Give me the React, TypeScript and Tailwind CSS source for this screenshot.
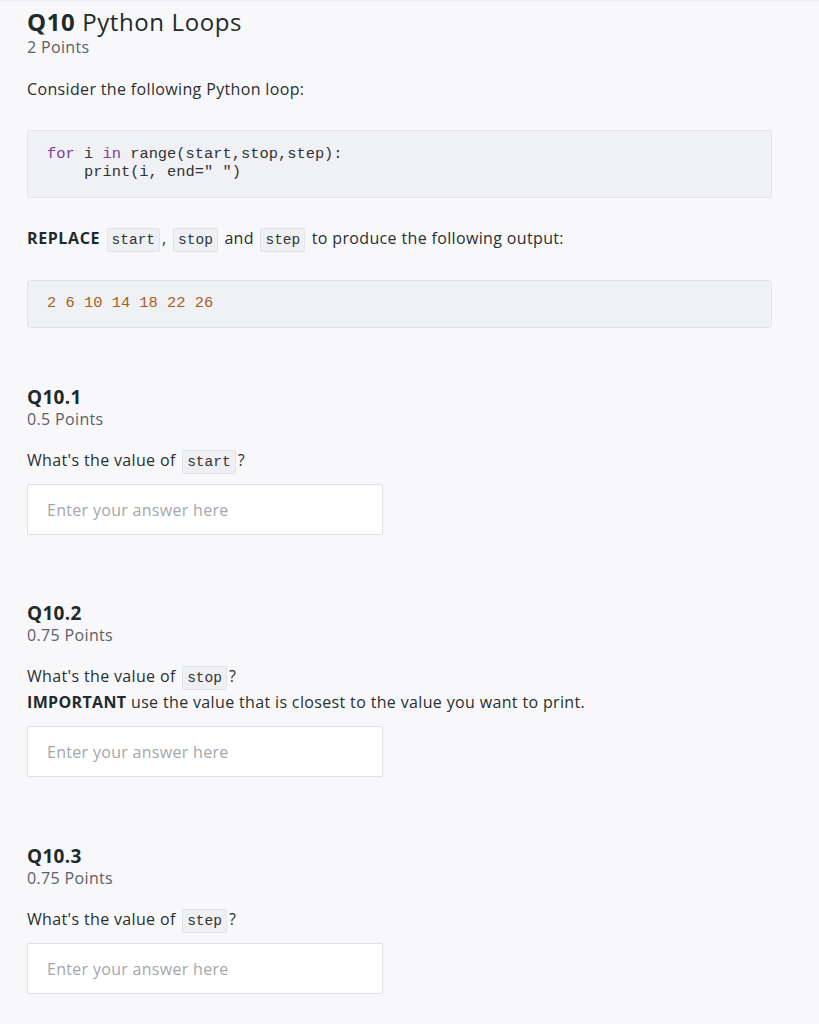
import React from 'react';

const MONO = "font-['Liberation_Mono',Courier,monospace]";

function Code({ children }: { children: React.ReactNode }) {
  return (
    <code
      className={`${MONO} mx-[2px] px-[4px] py-[3px] leading-[20px] tracking-normal text-[14.5px] text-[#333] bg-[#eff0f3] border border-[#e1e3e8] rounded-[2px]`}
    >
      {children}
    </code>
  );
}

function AnswerInput() {
  return (
    <input
      type="text"
      placeholder="Enter your answer here"
      className="mt-[11px] block w-[356px] h-[51px] px-[19px] bg-white border border-[#dcdfe3] rounded-[2px] text-[16px] tracking-[0.3px] text-[#333] placeholder:text-[#a3a7ab] outline-none"
    />
  );
}

interface Part {
  id: string;
  points: string;
  variable: string;
  top: string;
  note?: boolean;
}

const PARTS: Part[] = [
  { id: 'Q10.1', points: '0.5 Points', variable: 'start', top: 'mt-[57px]' },
  { id: 'Q10.2', points: '0.75 Points', variable: 'stop', top: 'mt-[66px]', note: true },
  { id: 'Q10.3', points: '0.75 Points', variable: 'step', top: 'mt-[67px]' },
];

export default function App() {
  return (
    <div className="min-h-[1024px] bg-[#f8f8fa] shadow-[inset_0_3px_3px_-2px_rgba(0,0,0,0.06)] font-['Open_Sans','Noto_Sans',sans-serif] text-[#1e2a2b]">
      <div className="pl-[27px] pr-[47px] pt-[7px]">
        {/* Header */}
        <h1 className="text-[24px] leading-[30px] font-normal tracking-[0.6px]">
          <span className="font-bold">Q10</span> Python Loops
        </h1>
        <p className="text-[16px] leading-[20px] tracking-[0.35px] text-[#5b6166]">2 Points</p>

        <p className="mt-[21px] text-[16px] leading-[22px] tracking-[0.35px] text-[#2a2f31]">
          Consider the following Python loop:
        </p>

        <pre
          className={`${MONO} mt-[30px] h-[68px] pl-[19px] pt-[14px] text-[15.4px] leading-[18px] text-[#333] bg-[#f0f1f4] border border-[#e1e3e8] rounded-[3px]`}
        >
          <span className="text-[#7b3f9e]">for</span> i <span className="text-[#7b3f9e]">in</span> range(start,stop,step):{'\n'}
          {'    '}print(i, end=" ")
        </pre>

        <p className="mt-[27px] text-[16px] leading-[26px] tracking-[0.35px] text-[#2a2f31]">
          <strong className="font-bold tracking-[0.6px] text-[#1e2a2b]">REPLACE</strong> <Code>start</Code>,{' '}
          <Code>stop</Code> and <Code>step</Code> to produce the following output:
        </p>

        <pre
          className={`${MONO} mt-[29px] h-[48px] pl-[19px] pt-[13px] text-[15.4px] leading-[18px] text-[#a95e20] bg-[#f0f1f4] border border-[#e1e3e8] rounded-[3px]`}
        >
          2 6 10 14 18 22 26
        </pre>

        {/* Sub-questions */}
        {PARTS.map((p) => (
          <div key={p.id} className={p.top}>
            <h2 className="text-[19px] leading-[24px] font-bold tracking-[0.3px]">{p.id}</h2>
            <p className="text-[16px] leading-[20px] tracking-[0.35px] text-[#5b6166]">{p.points}</p>
            <div className="mt-[18px] text-[16px] leading-[26px] tracking-[0.35px] text-[#2a2f31]">
              <p>
                What's the value of <Code>{p.variable}</Code>?
              </p>
              {p.note && (
                <p>
                  <strong className="font-bold text-[#1e2a2b]">IMPORTANT</strong> use the value that is closest to the
                  value you want to print.
                </p>
              )}
            </div>
            <AnswerInput />
          </div>
        ))}
      </div>
    </div>
  );
}
